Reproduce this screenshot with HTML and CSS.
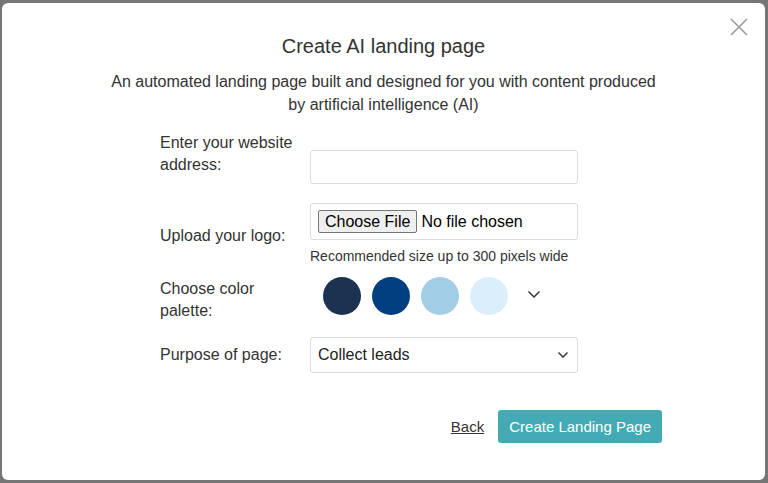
FILE: index.html
```html
<!DOCTYPE html>
<html>
<head>
<meta charset="utf-8">
<link rel="stylesheet" href="styles.css">
</head>
<body>
<div class="overlay">
  <div class="modal">
    <button class="close" aria-label="Close">
      <svg width="18" height="18" viewBox="0 0 18 18"><path d="M1 1L17 17M17 1L1 17" stroke="#9a9a9a" stroke-width="1.6" fill="none"/></svg>
    </button>
    <h1 class="title">Create AI landing page</h1>
    <p class="subtitle">An automated landing page built and designed for you with content produced by artificial intelligence (AI)</p>
    <div class="form">
      <div class="row row-url">
        <label class="label">Enter your website address:</label>
        <div class="field"><div class="input"></div></div>
      </div>
      <div class="row row-logo">
        <label class="label">Upload your logo:</label>
        <div class="field">
          <div class="input file"><span class="file-btn">Choose File</span><span class="file-text">No file chosen</span></div>
          <div class="hint">Recommended size up to 300 pixels wide</div>
        </div>
      </div>
      <div class="row row-palette">
        <label class="label">Choose color palette:</label>
        <div class="field palette">
          <span class="swatch s1"></span>
          <span class="swatch s2"></span>
          <span class="swatch s3"></span>
          <span class="swatch s4"></span>
          <svg class="chev" width="14" height="9" viewBox="0 0 14 9"><path d="M1.5 1.5L7 7L12.5 1.5" stroke="#333" stroke-width="1.5" fill="none"/></svg>
        </div>
      </div>
      <div class="row row-purpose">
        <label class="label">Purpose of page:</label>
        <div class="field">
          <div class="input select"><span>Collect leads</span>
            <svg width="12" height="8" viewBox="0 0 12 8"><path d="M1.5 1.5L6 6L10.5 1.5" stroke="#444" stroke-width="1.6" fill="none"/></svg>
          </div>
        </div>
      </div>
    </div>
    <div class="actions">
      <a class="back" href="#">Back</a>
      <button class="primary">Create Landing Page</button>
    </div>
  </div>
</div>
</body>
</html>
```
FILE: styles.css
```css
html, body {
  margin: 0;
  padding: 0;
  width: 768px;
  height: 483px;
  overflow: hidden;
  font-family: "Liberation Sans", Arial, sans-serif;
  color: #333;
}
.overlay {
  width: 768px;
  height: 483px;
  background: #767676;
  padding: 3px 3px 3px 2px;
  box-sizing: border-box;
}
.modal {
  position: relative;
  background: #fff;
  border-radius: 6px;
  height: 477px;
  box-sizing: border-box;
  padding-top: 31px;
}
.close {
  position: absolute;
  top: 15px;
  right: 17px;
  border: 0;
  background: none;
  padding: 0;
  width: 18px;
  height: 18px;
  cursor: pointer;
}
.close svg { display: block; }
.title {
  margin: 0;
  text-align: center;
  font-size: 20px;
  font-weight: normal;
  line-height: 24px;
  color: #333;
}
.subtitle {
  margin: 12px auto 0;
  width: 560px;
  text-align: center;
  font-size: 16px;
  line-height: 23px;
  color: #333;
}
.form {
  margin: 16px 0 0 158px;
  width: 418px;
}
.row {
  display: flex;
}
.label {
  width: 150px;
  flex: none;
  font-size: 16px;
  line-height: 22px;
  color: #333;
}
.field {
  width: 268px;
  flex: none;
}
.input {
  box-sizing: border-box;
  width: 268px;
  border: 1px solid #dcdcdc;
  border-radius: 3px;
  background: #fff;
}
.row-url .input { margin-top: 18px; height: 34px; }
.row-logo { margin-top: 19px; align-items: center; }
.row-logo .label { padding-top: 3px; }
.file {
  height: 37px;
  display: flex;
  align-items: center;
  padding-left: 7px;
  font-size: 16px;
}
.file-btn {
  background: #efefef;
  border: 1px solid #767676;
  border-radius: 2px;
  padding: 1px 6px;
  line-height: 19px;
  color: #000;
}
.file-text {
  margin-left: 4px;
  color: #000;
}
.hint {
  margin-top: 8px;
  font-size: 14px;
  line-height: 17px;
  color: #333;
}
.row-palette { margin-top: 11px; }
.row-palette .label { padding-top: 2px; }
.palette {
  display: flex;
  align-items: center;
  gap: 11px;
  padding-left: 13px;
  box-sizing: border-box;
  height: 40px;
}
.swatch {
  width: 38px;
  height: 38px;
  border-radius: 50%;
  flex: none;
}
.s1 { background: #1b3350; }
.s2 { background: #023f80; }
.s3 { background: #a2cde6; }
.s4 { background: #dbeefb; }
.chev { margin-left: 8px; margin-top: -4px; }
.row-purpose { margin-top: 15px; align-items: center; }
.select {
  height: 36px;
  display: flex;
  align-items: center;
  justify-content: space-between;
  padding: 0 8px 0 7px;
  font-size: 16px;
  color: #222;
}
.actions {
  display: flex;
  justify-content: flex-end;
  align-items: center;
  margin: 37px 103px 0 0;
  gap: 14px;
}
.back {
  font-size: 15px;
  color: #333;
  text-decoration: underline;
}
.primary {
  background: #44abb4;
  color: #fff;
  border: 0;
  border-radius: 3px;
  height: 33px;
  padding: 0 11px;
  font-family: "Liberation Sans", Arial, sans-serif;
  font-size: 15px;
  cursor: pointer;
}
```
